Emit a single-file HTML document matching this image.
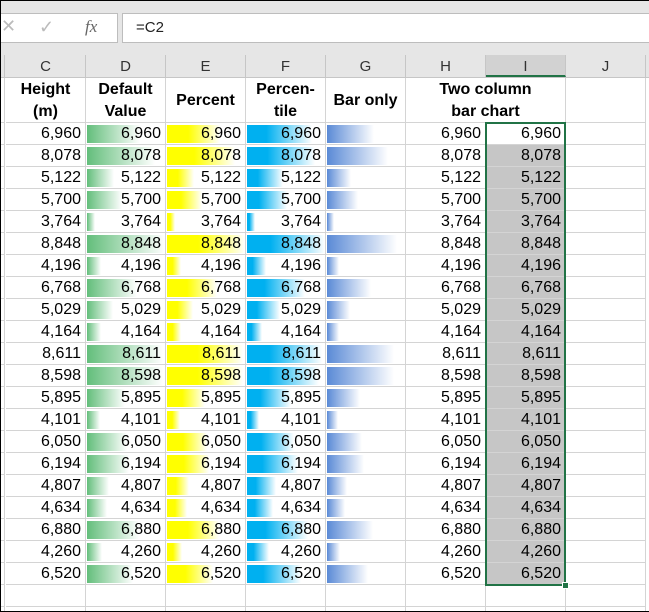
<!DOCTYPE html><html><head><style>
*{margin:0;padding:0;box-sizing:border-box}
html{width:649px;height:612px;overflow:hidden}
body{width:649px;height:612px;overflow:hidden;background:#fff;font-family:"Liberation Sans",Arial,sans-serif;position:relative}
.frame{position:absolute;left:0;top:0;width:649px;height:612px;border:1px solid #000;border-right:none;pointer-events:none;z-index:9}
.top{position:absolute;left:0;top:0;width:649px;height:55px;background:#e6e6e6}
.b1{position:absolute;left:-2px;top:13px;width:120px;height:30px;background:#fff;border:1px solid #bdbdbd}
.b2{position:absolute;left:122px;top:13px;width:540px;height:30px;background:#fff;border:1px solid #bdbdbd;font-size:15px;line-height:28px;padding-left:13px;color:#222}
.ch{position:absolute;left:0;top:55px;height:23px;width:649px;background:#e6e6e6;border-bottom:1px solid #c6c6c6}
.ch div{position:absolute;top:0;height:22px;width:80px;border-right:1px solid #c6c6c6;text-align:center;font-size:15px;line-height:23px;color:#333}
.r{position:absolute;left:0;height:22px;width:649px}
.r>div{position:absolute;top:0;height:100%;width:80px;border-right:1px solid #d4d4d4;border-bottom:1px solid #d4d4d4;text-align:right;padding-right:4px;font-size:16px;line-height:22px;color:#000}
.r>div span{position:relative}
.bar{position:absolute;left:1px;top:2px;height:18px}
.g{background:linear-gradient(to right,#63be7b,#fff)}
.y{background:linear-gradient(to right,#ffff00 40%,#fff)}
.c{background:linear-gradient(to right,#00b0f0 30%,#fff)}
.bl{background:linear-gradient(to right,#5a8ad6,#fff)}
.r>div.gr{background:#c6c6c6}
.h>div{font-weight:bold;text-align:center;padding:0;line-height:22px;font-size:16px}
.sel{position:absolute;left:485px;top:122px;width:81px;height:464px;border:2px solid #217346}
.hd{position:absolute;left:562px;top:582px;width:7px;height:7px;background:#217346;border:1px solid #fff}
</style></head><body>
<div class="top"><div class="b1"><span style="position:absolute;left:2px;top:2px;color:#bbb;font-size:18px">✕</span><span style="position:absolute;left:40px;top:3px;color:#bbb;font-size:18px">✓</span><span style="position:absolute;left:86px;top:3px;color:#666;font-size:17px;font-style:italic;font-family:'Liberation Serif',serif">fx</span></div><div class="b2">=C2</div></div>
<div class="ch"><div style="left:-75px"></div><div style="left:6px">C</div><div style="left:86px">D</div><div style="left:166px">E</div><div style="left:246px">F</div><div style="left:326px">G</div><div style="left:406px">H</div><div style="left:486px;background:#d2d2d2;border-bottom:2px solid #217346">I</div><div style="left:566px">J</div></div>
<div class="r h" style="top:78px;height:45px"><div style="left:-75px"></div><div style="left:6px;padding-top:1px">Height<br>(m)</div><div style="left:86px;padding-top:1px">Default<br>Value</div><div style="left:166px;line-height:45px">Percent</div><div style="left:246px;padding-top:1px">Percen-<br>tile</div><div style="left:326px;line-height:45px">Bar only</div><div style="left:406px;width:160px;padding-top:1px">Two column<br>bar chart</div><div style="left:566px"></div></div>

<div class="r" style="top:123px"><div style="left:-75px"></div><div style="left:6px">6,960</div><div style="left:86px"><i class="bar g" style="width:53px"></i><span>6,960</span></div><div style="left:166px"><i class="bar y" style="width:53px"></i><span>6,960</span></div><div style="left:246px"><i class="bar c" style="width:65px"></i><span>6,960</span></div><div style="left:326px"><i class="bar bl" style="width:47px"></i></div><div style="left:406px">6,960</div><div style="left:486px">6,960</div><div style="left:566px"></div></div>
<div class="r" style="top:145px"><div style="left:-75px"></div><div style="left:6px">8,078</div><div style="left:86px"><i class="bar g" style="width:68px"></i><span>8,078</span></div><div style="left:166px"><i class="bar y" style="width:68px"></i><span>8,078</span></div><div style="left:246px"><i class="bar c" style="width:68px"></i><span>8,078</span></div><div style="left:326px"><i class="bar bl" style="width:61px"></i></div><div style="left:406px">8,078</div><div class="gr" style="left:486px">8,078</div><div style="left:566px"></div></div>
<div class="r" style="top:167px"><div style="left:-75px"></div><div style="left:6px">5,122</div><div style="left:86px"><i class="bar g" style="width:27px"></i><span>5,122</span></div><div style="left:166px"><i class="bar y" style="width:27px"></i><span>5,122</span></div><div style="left:246px"><i class="bar c" style="width:36px"></i><span>5,122</span></div><div style="left:326px"><i class="bar bl" style="width:24px"></i></div><div style="left:406px">5,122</div><div class="gr" style="left:486px">5,122</div><div style="left:566px"></div></div>
<div class="r" style="top:189px"><div style="left:-75px"></div><div style="left:6px">5,700</div><div style="left:86px"><i class="bar g" style="width:35px"></i><span>5,700</span></div><div style="left:166px"><i class="bar y" style="width:35px"></i><span>5,700</span></div><div style="left:246px"><i class="bar c" style="width:40px"></i><span>5,700</span></div><div style="left:326px"><i class="bar bl" style="width:31px"></i></div><div style="left:406px">5,700</div><div class="gr" style="left:486px">5,700</div><div style="left:566px"></div></div>
<div class="r" style="top:211px"><div style="left:-75px"></div><div style="left:6px">3,764</div><div style="left:86px"><i class="bar g" style="width:8px"></i><span>3,764</span></div><div style="left:166px"><i class="bar y" style="width:8px"></i><span>3,764</span></div><div style="left:246px"><i class="bar c" style="width:8px"></i><span>3,764</span></div><div style="left:326px"><i class="bar bl" style="width:7px"></i></div><div style="left:406px">3,764</div><div class="gr" style="left:486px">3,764</div><div style="left:566px"></div></div>
<div class="r" style="top:233px"><div style="left:-75px"></div><div style="left:6px">8,848</div><div style="left:86px"><i class="bar g" style="width:78px"></i><span>8,848</span></div><div style="left:166px"><i class="bar y" style="width:78px"></i><span>8,848</span></div><div style="left:246px"><i class="bar c" style="width:78px"></i><span>8,848</span></div><div style="left:326px"><i class="bar bl" style="width:70px"></i></div><div style="left:406px">8,848</div><div class="gr" style="left:486px">8,848</div><div style="left:566px"></div></div>
<div class="r" style="top:255px"><div style="left:-75px"></div><div style="left:6px">4,196</div><div style="left:86px"><i class="bar g" style="width:14px"></i><span>4,196</span></div><div style="left:166px"><i class="bar y" style="width:14px"></i><span>4,196</span></div><div style="left:246px"><i class="bar c" style="width:19px"></i><span>4,196</span></div><div style="left:326px"><i class="bar bl" style="width:12px"></i></div><div style="left:406px">4,196</div><div class="gr" style="left:486px">4,196</div><div style="left:566px"></div></div>
<div class="r" style="top:277px"><div style="left:-75px"></div><div style="left:6px">6,768</div><div style="left:86px"><i class="bar g" style="width:50px"></i><span>6,768</span></div><div style="left:166px"><i class="bar y" style="width:50px"></i><span>6,768</span></div><div style="left:246px"><i class="bar c" style="width:58px"></i><span>6,768</span></div><div style="left:326px"><i class="bar bl" style="width:44px"></i></div><div style="left:406px">6,768</div><div class="gr" style="left:486px">6,768</div><div style="left:566px"></div></div>
<div class="r" style="top:299px"><div style="left:-75px"></div><div style="left:6px">5,029</div><div style="left:86px"><i class="bar g" style="width:26px"></i><span>5,029</span></div><div style="left:166px"><i class="bar y" style="width:26px"></i><span>5,029</span></div><div style="left:246px"><i class="bar c" style="width:33px"></i><span>5,029</span></div><div style="left:326px"><i class="bar bl" style="width:23px"></i></div><div style="left:406px">5,029</div><div class="gr" style="left:486px">5,029</div><div style="left:566px"></div></div>
<div class="r" style="top:321px"><div style="left:-75px"></div><div style="left:6px">4,164</div><div style="left:86px"><i class="bar g" style="width:14px"></i><span>4,164</span></div><div style="left:166px"><i class="bar y" style="width:14px"></i><span>4,164</span></div><div style="left:246px"><i class="bar c" style="width:15px"></i><span>4,164</span></div><div style="left:326px"><i class="bar bl" style="width:12px"></i></div><div style="left:406px">4,164</div><div class="gr" style="left:486px">4,164</div><div style="left:566px"></div></div>
<div class="r" style="top:343px"><div style="left:-75px"></div><div style="left:6px">8,611</div><div style="left:86px"><i class="bar g" style="width:76px"></i><span>8,611</span></div><div style="left:166px"><i class="bar y" style="width:76px"></i><span>8,611</span></div><div style="left:246px"><i class="bar c" style="width:75px"></i><span>8,611</span></div><div style="left:326px"><i class="bar bl" style="width:67px"></i></div><div style="left:406px">8,611</div><div class="gr" style="left:486px">8,611</div><div style="left:566px"></div></div>
<div class="r" style="top:365px"><div style="left:-75px"></div><div style="left:6px">8,598</div><div style="left:86px"><i class="bar g" style="width:76px"></i><span>8,598</span></div><div style="left:166px"><i class="bar y" style="width:76px"></i><span>8,598</span></div><div style="left:246px"><i class="bar c" style="width:72px"></i><span>8,598</span></div><div style="left:326px"><i class="bar bl" style="width:67px"></i></div><div style="left:406px">8,598</div><div class="gr" style="left:486px">8,598</div><div style="left:566px"></div></div>
<div class="r" style="top:387px"><div style="left:-75px"></div><div style="left:6px">5,895</div><div style="left:86px"><i class="bar g" style="width:38px"></i><span>5,895</span></div><div style="left:166px"><i class="bar y" style="width:38px"></i><span>5,895</span></div><div style="left:246px"><i class="bar c" style="width:44px"></i><span>5,895</span></div><div style="left:326px"><i class="bar bl" style="width:33px"></i></div><div style="left:406px">5,895</div><div class="gr" style="left:486px">5,895</div><div style="left:566px"></div></div>
<div class="r" style="top:409px"><div style="left:-75px"></div><div style="left:6px">4,101</div><div style="left:86px"><i class="bar g" style="width:13px"></i><span>4,101</span></div><div style="left:166px"><i class="bar y" style="width:13px"></i><span>4,101</span></div><div style="left:246px"><i class="bar c" style="width:12px"></i><span>4,101</span></div><div style="left:326px"><i class="bar bl" style="width:11px"></i></div><div style="left:406px">4,101</div><div class="gr" style="left:486px">4,101</div><div style="left:566px"></div></div>
<div class="r" style="top:431px"><div style="left:-75px"></div><div style="left:6px">6,050</div><div style="left:86px"><i class="bar g" style="width:40px"></i><span>6,050</span></div><div style="left:166px"><i class="bar y" style="width:40px"></i><span>6,050</span></div><div style="left:246px"><i class="bar c" style="width:47px"></i><span>6,050</span></div><div style="left:326px"><i class="bar bl" style="width:35px"></i></div><div style="left:406px">6,050</div><div class="gr" style="left:486px">6,050</div><div style="left:566px"></div></div>
<div class="r" style="top:453px"><div style="left:-75px"></div><div style="left:6px">6,194</div><div style="left:86px"><i class="bar g" style="width:42px"></i><span>6,194</span></div><div style="left:166px"><i class="bar y" style="width:42px"></i><span>6,194</span></div><div style="left:246px"><i class="bar c" style="width:51px"></i><span>6,194</span></div><div style="left:326px"><i class="bar bl" style="width:37px"></i></div><div style="left:406px">6,194</div><div class="gr" style="left:486px">6,194</div><div style="left:566px"></div></div>
<div class="r" style="top:475px"><div style="left:-75px"></div><div style="left:6px">4,807</div><div style="left:86px"><i class="bar g" style="width:22px"></i><span>4,807</span></div><div style="left:166px"><i class="bar y" style="width:22px"></i><span>4,807</span></div><div style="left:246px"><i class="bar c" style="width:29px"></i><span>4,807</span></div><div style="left:326px"><i class="bar bl" style="width:20px"></i></div><div style="left:406px">4,807</div><div class="gr" style="left:486px">4,807</div><div style="left:566px"></div></div>
<div class="r" style="top:497px"><div style="left:-75px"></div><div style="left:6px">4,634</div><div style="left:86px"><i class="bar g" style="width:20px"></i><span>4,634</span></div><div style="left:166px"><i class="bar y" style="width:20px"></i><span>4,634</span></div><div style="left:246px"><i class="bar c" style="width:26px"></i><span>4,634</span></div><div style="left:326px"><i class="bar bl" style="width:18px"></i></div><div style="left:406px">4,634</div><div class="gr" style="left:486px">4,634</div><div style="left:566px"></div></div>
<div class="r" style="top:519px"><div style="left:-75px"></div><div style="left:6px">6,880</div><div style="left:86px"><i class="bar g" style="width:52px"></i><span>6,880</span></div><div style="left:166px"><i class="bar y" style="width:52px"></i><span>6,880</span></div><div style="left:246px"><i class="bar c" style="width:61px"></i><span>6,880</span></div><div style="left:326px"><i class="bar bl" style="width:46px"></i></div><div style="left:406px">6,880</div><div class="gr" style="left:486px">6,880</div><div style="left:566px"></div></div>
<div class="r" style="top:541px"><div style="left:-75px"></div><div style="left:6px">4,260</div><div style="left:86px"><i class="bar g" style="width:15px"></i><span>4,260</span></div><div style="left:166px"><i class="bar y" style="width:15px"></i><span>4,260</span></div><div style="left:246px"><i class="bar c" style="width:22px"></i><span>4,260</span></div><div style="left:326px"><i class="bar bl" style="width:13px"></i></div><div style="left:406px">4,260</div><div class="gr" style="left:486px">4,260</div><div style="left:566px"></div></div>
<div class="r" style="top:563px"><div style="left:-75px"></div><div style="left:6px">6,520</div><div style="left:86px"><i class="bar g" style="width:46px"></i><span>6,520</span></div><div style="left:166px"><i class="bar y" style="width:46px"></i><span>6,520</span></div><div style="left:246px"><i class="bar c" style="width:54px"></i><span>6,520</span></div><div style="left:326px"><i class="bar bl" style="width:41px"></i></div><div style="left:406px">6,520</div><div class="gr" style="left:486px">6,520</div><div style="left:566px"></div></div>
<div class="r" style="top:585px"><div style="left:-75px"></div><div style="left:6px"></div><div style="left:86px"></div><div style="left:166px"></div><div style="left:246px"></div><div style="left:326px"></div><div style="left:406px"></div><div style="left:486px"></div><div style="left:566px"></div></div>
<div class="r" style="top:607px;height:5px"><div style="left:-75px;border-bottom:none"></div><div style="left:6px;border-bottom:none"></div><div style="left:86px;border-bottom:none"></div><div style="left:166px;border-bottom:none"></div><div style="left:246px;border-bottom:none"></div><div style="left:326px;border-bottom:none"></div><div style="left:406px;border-bottom:none"></div><div style="left:486px;border-bottom:none"></div><div style="left:566px;border-bottom:none"></div></div>
<div class="sel"></div><div class="hd"></div>
<div class="frame"></div>
</body></html>
